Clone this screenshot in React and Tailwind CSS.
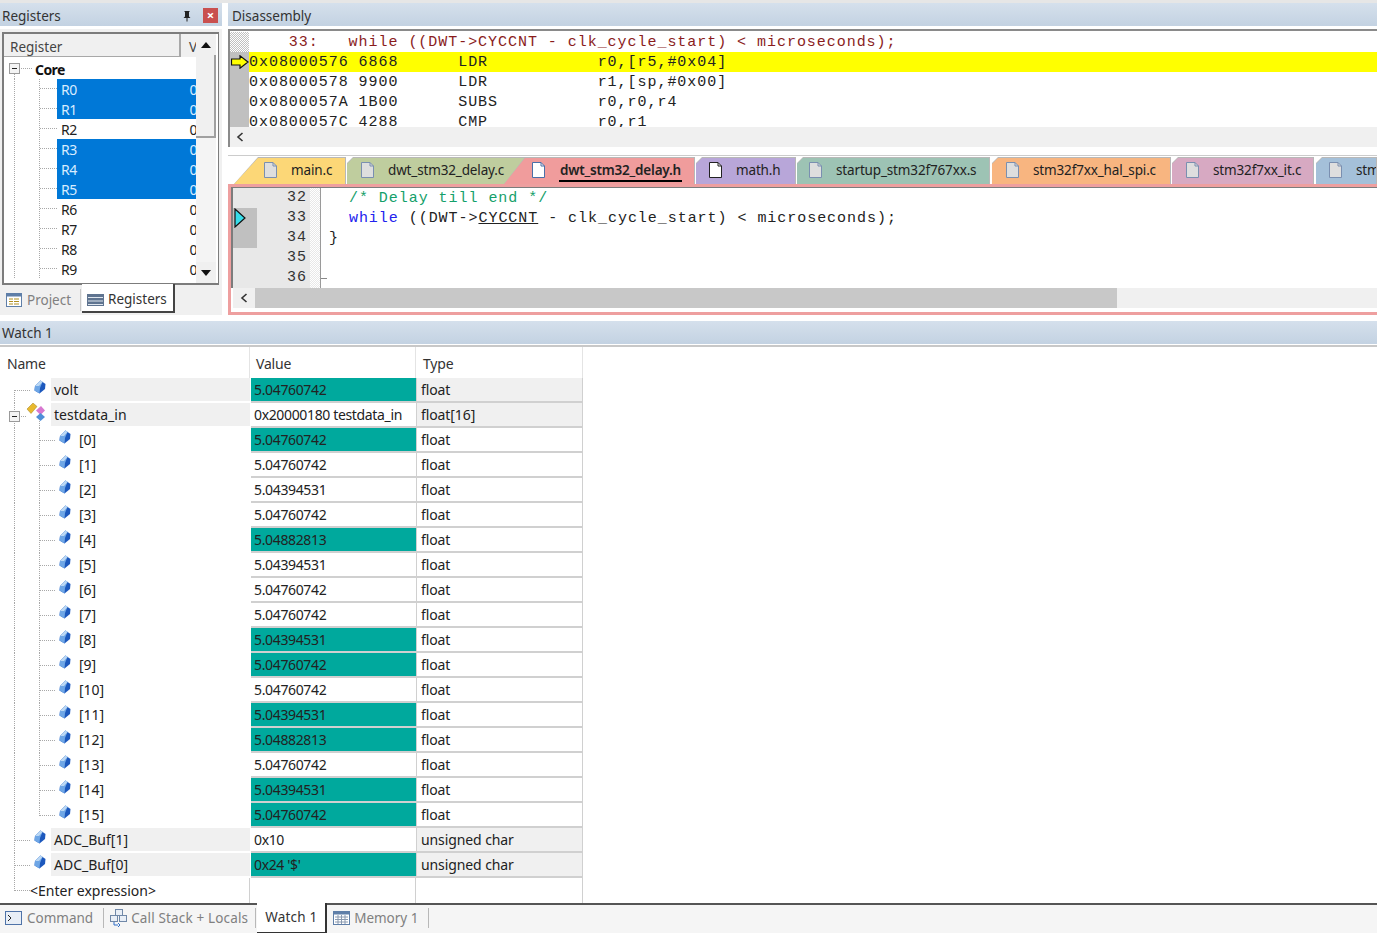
import React from 'react';

const UI = "[font-family:'Noto_Sans',sans-serif]";
const MONO = "[font-family:'Liberation_Mono',monospace] text-[15px] tracking-[0.96px]";

// tree icon used for every variable in the watch list
function Cube({ x, y }) {
    return (
        <g transform={`translate(${x} ${y})`}>
            <polygon points="0.5,-6.5 5.5,-3 5,2 -0.5,6.5 -5.5,3.5 -5,-1" fill="#1c58bd" />
            <polygon points="0.5,-6.5 2.5,-5 0,1 -0.5,6.5 -5.5,3.5 -5,-1" fill="#6ea6e6" />
            <polygon points="0.5,-6.5 2.5,-5 -1,-1 -5,-1" fill="#bcd8f4" />
        </g>
    );
}

function MinusBox({ x, y }) {
    return (
        <g>
            <rect x={x + 0.5} y={y + 0.5} width="10" height="10" fill="#f4f4f4" stroke="#9a9a9a" />
            <line x1={x + 3} x2={x + 8} y1={y + 5.5} y2={y + 5.5} stroke="#222" />
        </g>
    );
}

function Dots({ x1, y1, x2, y2 }) {
    return <line x1={x1} y1={y1} x2={x2} y2={y2} stroke="#a8a8a8" strokeDasharray="1 1" />;
}

function WatchTree({ kind, last }) {
    if (kind === 'child') {
        return (
            <svg width="76" height="25" className="shrink-0">
                <Dots x1={14.5} y1={0} x2={14.5} y2={25} />
                <Dots x1={39.5} y1={0} x2={39.5} y2={last ? 13 : 25} />
                <Dots x1={40} y1={12.5} x2={55} y2={12.5} />
                <Cube x={65} y={9} />
            </svg>
        );
    }
    if (kind === 'array') {
        return (
            <svg width="51" height="25" className="shrink-0">
                <Dots x1={14.5} y1={0} x2={14.5} y2={25} />
                <Dots x1={39.5} y1={18} x2={39.5} y2={25} />
                <Dots x1={19} y1={13.5} x2={27} y2={13.5} />
                <MinusBox x={9} y={8} />
                <polygon points="27,6 33,0 37,3.5 31,10.5" fill="#e8b92e" stroke="#a08020" strokeWidth="0.5" />
                <polygon points="36,7.5 41,3 45,7.5 40.5,12" fill="#d878d0" />
                <polygon points="36,14 40.5,10 45,14 40.5,18" fill="#4f8fd8" />
            </svg>
        );
    }
    if (kind === 'enter') {
        return (
            <svg width="30" height="25" className="shrink-0">
                <Dots x1={14.5} y1={0} x2={14.5} y2={13} />
                <Dots x1={15} y1={12.5} x2={30} y2={12.5} />
            </svg>
        );
    }
    return (
        <svg width="51" height="25" className="shrink-0">
            <Dots x1={14.5} y1={kind === 'first' ? 12 : 0} x2={14.5} y2={25} />
            <Dots x1={15} y1={12.5} x2={31} y2={12.5} />
            <Cube x={40} y={9} />
        </svg>
    );
}

function RegTree({ core }) {
    if (core) {
        return (
            <svg width="31" height="20" className="shrink-0">
                <Dots x1={10.5} y1={15} x2={10.5} y2={20} />
                <Dots x1={15} y1={9.5} x2={28} y2={9.5} />
                <MinusBox x={5} y={4} />
            </svg>
        );
    }
    return (
        <svg width="53" height="20" className="shrink-0">
            <Dots x1={10.5} y1={0} x2={10.5} y2={20} />
            <Dots x1={35.5} y1={0} x2={35.5} y2={20} />
            <Dots x1={36} y1={9.5} x2={53} y2={9.5} />
        </svg>
    );
}

function TitleBar({ children, right, text = 'pt-[4px] pl-[2px]' }) {
    return (
        <div className="h-[23px] shrink-0 flex items-center justify-between bg-gradient-to-b from-[#d5e0ec] to-[#c3d2e2] text-[13.5px] text-[#333]">
            <span className={text}>{children}</span>
            {right}
        </div>
    );
}

function DocIcon({ variant }) {
    const stroke = variant === 'black' ? '#222' : variant === 'blue' ? '#4a6fa8' : '#7a8fb0';
    const fill = variant === 'black' ? '#fff' : variant === 'blue' ? '#fff' : '#dedede';
    return (
        <svg width="15" height="18" viewBox="0 0 15 18" className="shrink-0">
            <path d="M1.5 1.5H10L13.5 5V16.5H1.5Z" fill={fill} stroke={stroke} />
            <path d="M10 1.5V5H13.5" fill="none" stroke={stroke} />
        </svg>
    );
}

const tabs = [
    { label: 'main.c', box: 'w-[112px] ml-[6px] z-[1] [clip-path:polygon(24px_0,100%_0,100%_100%,0_100%)]', inner: 'bg-[#fcd777] pl-[29px] [clip-path:polygon(24px_0,100%_0,100%_100%,0_100%)]' },
    { label: 'dwt_stm32_delay.c', box: 'w-[178px] ml-[1px] [clip-path:polygon(6px_0,100%_0,100%_100%,0_100%,0_6px)]', inner: 'bg-[#bfcd9e] pl-[13px] [clip-path:polygon(6px_0,100%_0,100%_100%,0_100%,0_6px)]' },
    { label: 'dwt_stm32_delay.h', box: 'w-[191px] -ml-[21px] z-[2] [clip-path:polygon(21px_0,100%_0,100%_100%,0_100%)]', inner: 'bg-[#f09c9c] pl-[27px] [clip-path:polygon(21px_0,100%_0,100%_100%,0_100%)]', active: true },
    { label: 'math.h', box: 'w-[100px] ml-[1px] [clip-path:polygon(6px_0,100%_0,100%_100%,0_100%,0_6px)]', inner: 'bg-[#b8a6d9] pl-[12px] [clip-path:polygon(6px_0,100%_0,100%_100%,0_100%,0_6px)]', doc: 'black' },
    { label: 'startup_stm32f767xx.s', box: 'w-[193px] ml-[1px] [clip-path:polygon(6px_0,100%_0,100%_100%,0_100%,0_6px)]', inner: 'bg-[#9dc3b4] pl-[11px] [clip-path:polygon(6px_0,100%_0,100%_100%,0_100%,0_6px)]' },
    { label: 'stm32f7xx_hal_spi.c', box: 'w-[179px] ml-[2px] [clip-path:polygon(6px_0,100%_0,100%_100%,0_100%,0_6px)]', inner: 'bg-[#f8b580] pl-[13px] [clip-path:polygon(6px_0,100%_0,100%_100%,0_100%,0_6px)]' },
    { label: 'stm32f7xx_it.c', box: 'w-[142px] ml-[1px] [clip-path:polygon(6px_0,100%_0,100%_100%,0_100%,0_6px)]', inner: 'bg-[#d7a9c2] pl-[13px] [clip-path:polygon(6px_0,100%_0,100%_100%,0_100%,0_6px)]' },
    { label: 'stm', box: 'w-[61px] ml-[2px] [clip-path:polygon(6px_0,100%_0,100%_100%,0_100%,0_6px)]', inner: 'bg-[#a4c0d9] pl-[12px] [clip-path:polygon(6px_0,100%_0,100%_100%,0_100%,0_6px)]' },
];

function EditorTab({ tab }) {
    return (
        <div className={`relative shrink-0 h-[27px] bg-[#b8b8b8] pt-[1px] pr-[1px] ${tab.box}`}>
            <div className={`h-full pb-[2px] flex items-center gap-[13px] text-[13.5px] tracking-[-0.15px] text-[#222] ${tab.inner}`}>
                <DocIcon variant={tab.doc || (tab.active ? 'blue' : 'gray')} />
                <span className={tab.active ? 'font-semibold border-b-2 border-black leading-[19px] px-[1px] -mb-[3px] tracking-[-0.2px]' : ''}>{tab.label}</span>
            </div>
        </div>
    );
}

const regs = [
    { n: 'R0', sel: true }, { n: 'R1', sel: true }, { n: 'R2' }, { n: 'R3', sel: true }, { n: 'R4', sel: true },
    { n: 'R5', sel: true }, { n: 'R6' }, { n: 'R7' }, { n: 'R8' }, { n: 'R9' },
];

function ArrowBtn({ up }) {
    return (
        <div className="h-[21px] shrink-0 bg-[#f0f0f0] flex items-center justify-center">
            <svg width="10" height="6">
                <polygon points={up ? '5,0 10,6 0,6' : '0,0 10,0 5,6'} fill="#111" />
            </svg>
        </div>
    );
}

function RegistersPanel() {
    return (
        <div className="w-[222px] shrink-0 flex flex-col h-[312px]">
            <TitleBar
                right={
                    <div className="flex items-center gap-[11px] pr-[4px] pt-[2px]">
                        <svg width="10" height="12" viewBox="0 0 10 12">
                            <path d="M2.5 1H7.5V2H7V6.5L8.5 8H5.5V11.5H4.5V8H1.5L3 6.5V2H2.5Z" fill="#222" />
                        </svg>
                        <div className="w-[15px] h-[15px] bg-[#c9504f] flex items-center justify-center text-white text-[13px] font-bold leading-none">×</div>
                    </div>
                }
            >
                Registers
            </TitleBar>
            <div className="mt-[3px] h-[256px] shrink-0 bg-[#f0f0f0] pl-[2px] pr-[3px] pt-[3px]">
                <div className="h-full border-t-2 border-l-2 border-r border-b-2 border-[#7c7c7c] flex bg-white overflow-hidden">
                    <div className="w-[192px] shrink-0 flex flex-col overflow-hidden">
                        <div className="h-[23px] shrink-0 flex bg-[#f0f0f0] text-[13.5px] text-[#444]">
                            <div className="w-[177px] shrink-0 pl-[6px] pt-[4px] flex items-center border-r-2 border-b border-[#a8a8a8]">Register</div>
                            <div className="flex-1 pl-[8px] pt-[4px] flex items-center overflow-hidden">V</div>
                        </div>
                        <div className="h-[20px] mt-[2px] shrink-0 flex items-center font-bold text-[14px] tracking-[-0.6px] text-[#111]">
                            <RegTree core />
                            Core
                        </div>
                        {regs.map((r) => (
                            <div key={r.n} className="h-[20px] shrink-0 flex text-[14px] tracking-[-0.4px]">
                                <RegTree />
                                <div className={`flex-1 flex items-center justify-between pl-[4px] -mr-[1px] ${r.sel ? 'bg-[#0078d7] text-[#d8ecff]' : 'text-[#222]'}`}>
                                    <span>{r.n}</span>
                                    <span>0</span>
                                </div>
                            </div>
                        ))}
                    </div>
                    <div className="w-[20px] shrink-0 flex flex-col bg-[#f4f4f4]">
                        <ArrowBtn up />
                        <div className="h-[83px] shrink-0 bg-[#f0f0f0] border-b-2 border-r-2 border-[#a0a0a0]" />
                        <div className="flex-1" />
                        <ArrowBtn />
                    </div>
                </div>
            </div>
            <div className="flex-1 flex bg-[#f0f0f0] text-[13.5px]">
                <div className="w-[81px] shrink-0 flex items-center pl-[6px] gap-[5px] text-[#808080] border-r border-[#c8c8c8] my-[4px]">
                    <svg width="16" height="14">
                        <rect x="0.5" y="0.5" width="15" height="13" fill="#fff" stroke="#5f7fa8" />
                        <rect x="0.5" y="0.5" width="15" height="3" fill="#5f7fa8" />
                        <path d="M3 6h4M3 8.5h4M3 11h4M8 6h5M8 8.5h5M8 11h5" stroke="#b09020" />
                    </svg>
                    Project
                </div>
                <div className="w-[93px] shrink-0 ml-[1px] -mt-[1px] h-[29px] pt-[4px] flex items-center pl-[5px] gap-[4px] bg-white border-r-2 border-b-2 border-[#444] text-[#333]">
                    <svg width="17" height="12">
                        <rect x="0" y="0" width="17" height="12" fill="#5f7490" />
                        <path d="M1 3.5H16M1 7H16M1 10.5H16" stroke="#dfe6ee" />
                    </svg>
                    Registers
                </div>
            </div>
        </div>
    );
}

const disasm = [
    { t: '    33:   while ((DWT->CYCCNT - clk_cycle_start) < microseconds);', c: 'text-[#8a1c1c]' },
    { t: '0x08000576 6868      LDR           r0,[r5,#0x04]', c: 'bg-[#ffff00] text-[#222]' },
    { t: '0x08000578 9900      LDR           r1,[sp,#0x00]', c: 'text-[#222]' },
    { t: '0x0800057A 1B00      SUBS          r0,r0,r4', c: 'text-[#222]' },
    { t: '0x0800057C 4288      CMP           r0,r1', c: 'text-[#222]' },
];

function DisassemblyPanel() {
    return (
        <div className="mt-[3px] h-[118px] shrink-0 border-t-2 border-l-2 border-[#8a8a8a] pt-[1px] flex flex-col overflow-hidden">
            <div className="h-[95px] shrink-0 flex overflow-hidden">
                <div className="w-[19px] shrink-0 flex flex-col bg-[#c0c0c0]">
                    <div className="h-[20px] shrink-0 bg-[repeating-conic-gradient(#c0c0c0_0_25%,#fff_0_50%)] bg-[length:2px_2px]" />
                    <div className="h-[20px] shrink-0 flex items-center pl-[1px]">
                        <svg width="18" height="14">
                            <polygon points="0.5,4 9,4 9,0.8 17,7 9,13.2 9,10 0.5,10" fill="#ffff00" stroke="#111" strokeWidth="1.2" />
                        </svg>
                    </div>
                </div>
                <div className={`flex-1 ${MONO}`}>
                    {disasm.map((l, i) => (
                        <div key={i} className={`h-[20px] leading-[21px] whitespace-pre ${l.c}`}>{l.t}</div>
                    ))}
                </div>
            </div>
            <div className="h-[20px] shrink-0 bg-[#f0f0f0] flex items-center pl-[6px]">
                <svg width="9" height="10">
                    <path d="M6.5 1L2 5L6.5 9" fill="none" stroke="#333" strokeWidth="1.6" />
                </svg>
            </div>
        </div>
    );
}

const lineNums = ['32', '33', '34', '35', '36'];

function Editor() {
    return (
        <div className="h-[131px] shrink-0 border-[3px] border-r-0 border-[#ee9f9f] bg-white flex flex-col overflow-hidden">
            <div className="h-[101px] shrink-0 flex border-t border-l-2 border-[#7c7c7c]">
                <div className={`w-[77px] shrink-0 bg-[#e8e8e8] ${MONO} text-[#333] flex flex-col`}>
                    {lineNums.map((n, i) => (
                        <div key={n} className="h-[20px] leading-[20px] flex justify-between">
                            <div className={`w-[24px] flex items-start ${i === 1 || i === 2 ? 'bg-[#c0c0c0]' : ''}`}>
                                {i === 1 && (
                                    <svg width="13" height="20" className="ml-[1px]">
                                        <polygon points="1,1 11,10 1,19" fill="#38dce8" stroke="#111" strokeWidth="1.2" />
                                    </svg>
                                )}
                            </div>
                            <span className="pr-[3px]">{n}</span>
                        </div>
                    ))}
                </div>
                <div className="w-[11px] shrink-0 bg-[repeating-conic-gradient(#e8e8e8_0_25%,#fff_0_50%)] bg-[length:2px_2px] border-r border-[#9a9a9a]" />
                <div className={`flex-1 ${MONO} text-[#222]`}>
                    <div className="h-[20px] pl-[8px] leading-[22px] whitespace-pre text-[#14a06a]">{'  /* Delay till end */'}</div>
                    <div className="h-[20px] pl-[8px] leading-[22px] whitespace-pre">
                        {'  '}<span className="text-[#2222ee]">while</span>{' ((DWT->'}<span className="underline">CYCCNT</span>{' - clk_cycle_start) < microseconds);'}
                    </div>
                    <div className="h-[20px] pl-[8px] leading-[22px]">{'}'}</div>
                    <div className="h-[20px]" />
                    <div className="h-[20px] flex items-center">
                        <div className="w-[6px] h-px bg-[#888]" />
                    </div>
                </div>
            </div>
            <div className="h-[20px] shrink-0 ml-[2px] bg-[#f0f0f0] flex">
                <div className="w-[22px] shrink-0 flex items-center justify-center">
                    <svg width="9" height="10">
                        <path d="M6.5 1L2 5L6.5 9" fill="none" stroke="#333" strokeWidth="1.6" />
                    </svg>
                </div>
                <div className="w-[862px] shrink-0 bg-[#c8c8c8]" />
            </div>
        </div>
    );
}

const F = 'float';
const rows = [
    { name: 'volt', kind: 'first', value: '5.04760742', hl: true, type: F },
    { name: 'testdata_in', kind: 'array', value: '0x20000180 testdata_in', type: 'float[16]' },
    { name: '[0]', kind: 'child', value: '5.04760742', hl: true, type: F },
    { name: '[1]', kind: 'child', value: '5.04760742', type: F },
    { name: '[2]', kind: 'child', value: '5.04394531', type: F },
    { name: '[3]', kind: 'child', value: '5.04760742', type: F },
    { name: '[4]', kind: 'child', value: '5.04882813', hl: true, type: F },
    { name: '[5]', kind: 'child', value: '5.04394531', type: F },
    { name: '[6]', kind: 'child', value: '5.04760742', type: F },
    { name: '[7]', kind: 'child', value: '5.04760742', type: F },
    { name: '[8]', kind: 'child', value: '5.04394531', hl: true, type: F },
    { name: '[9]', kind: 'child', value: '5.04760742', hl: true, type: F },
    { name: '[10]', kind: 'child', value: '5.04760742', type: F },
    { name: '[11]', kind: 'child', value: '5.04394531', hl: true, type: F },
    { name: '[12]', kind: 'child', value: '5.04882813', hl: true, type: F },
    { name: '[13]', kind: 'child', value: '5.04760742', type: F },
    { name: '[14]', kind: 'child', value: '5.04394531', hl: true, type: F },
    { name: '[15]', kind: 'child', value: '5.04760742', hl: true, type: F, last: true },
    { name: 'ADC_Buf[1]', kind: 'top', value: '0x10', type: 'unsigned char' },
    { name: 'ADC_Buf[0]', kind: 'top', value: "0x24 '$'", hl: true, type: 'unsigned char' },
];

function WatchRow({ row }) {
    const child = row.kind === 'child';
    return (
        <div className="h-[25px] flex text-[14px] text-[#222]">
            <div className="w-[250px] shrink-0 flex">
                <WatchTree kind={row.kind} last={row.last} />
                <div className={`flex-1 mb-[2px] pl-[3px] flex items-center ${child ? '' : 'bg-[#f0f0f0]'}`}>{row.name}</div>
            </div>
            <div className={`w-[165px] shrink-0 ml-[1px] pl-[3px] flex items-center tracking-[-0.35px] border-b-2 border-[#d0d0d0] ${row.hl ? 'bg-[#00a99d]' : ''}`}>{row.value}</div>
            <div className={`w-[167px] shrink-0 pl-[4px] flex items-center tracking-[-0.1px] border-l border-r border-b-2 border-[#d0d0d0] ${child ? '' : 'bg-[#f0f0f0]'}`}>{row.type}</div>
        </div>
    );
}

function BottomTab({ children, icon, gap = 'gap-[4px]' }) {
    return (
        <div className={`flex items-center ${gap} text-[#808080] shrink-0`}>
            {icon}
            {children}
        </div>
    );
}

function WatchPanel() {
    return (
        <>
            <div className="mt-[3px]">
                <TitleBar text="pt-[2px] pl-[2px]">Watch 1</TitleBar>
            </div>
            <div className="h-[2px] mt-[1px] shrink-0 bg-[#c8c8c8]" />
            <div className="h-[556px] shrink-0 overflow-hidden">
                <div className="h-[31px] flex text-[14px] tracking-[-0.2px] text-[#333]">
                    <div className="w-[250px] shrink-0 pl-[7px] flex items-center pt-[1px] border-r border-[#e4e4e4]">Name</div>
                    <div className="w-[166px] shrink-0 pl-[6px] flex items-center pt-[1px] border-r border-[#e4e4e4]">Value</div>
                    <div className="w-[167px] shrink-0 pl-[7px] flex items-center pt-[1px] border-r border-[#e4e4e4]">Type</div>
                </div>
                {rows.map((r) => (
                    <WatchRow key={r.name} row={r} />
                ))}
                <div className="h-[25px] flex text-[14px] text-[#222]">
                    <div className="w-[250px] shrink-0 flex items-center border-r border-[#d0d0d0]">
                        <WatchTree kind="enter" />
                        {'<Enter expression>'}
                    </div>
                    <div className="w-[166px] shrink-0 border-r border-[#d0d0d0]" />
                    <div className="w-[167px] shrink-0 border-r border-[#d0d0d0]" />
                </div>
            </div>
            <div className="flex-1 flex items-stretch bg-[#f5f5f5] border-t-2 border-[#555] text-[13.5px]">
                <div className="flex items-center pl-[5px] h-[24px] my-[1px]">
                    <BottomTab
                        gap="gap-[5px]"
                        icon={
                            <svg width="17" height="14">
                                <rect x="0.5" y="0.5" width="16" height="13" fill="#e8eef6" stroke="#4f73a8" />
                                <path d="M3 4L6 7L3 10" fill="none" stroke="#222" />
                            </svg>
                        }
                    >
                        Command
                    </BottomTab>
                    <div className="w-px h-[20px] bg-[#b8b8b8] ml-[10px] mr-[5px]" />
                    <BottomTab
                        gap="gap-[3px] tracking-[0.15px]"
                        icon={
                            <svg width="19" height="18">
                                <rect x="6.5" y="0.5" width="7" height="6" fill="#e8eef6" stroke="#7088a8" />
                                <rect x="1.5" y="6.5" width="7" height="6" fill="#e8eef6" stroke="#7088a8" />
                                <rect x="10.5" y="6.5" width="7" height="6" fill="#e8eef6" stroke="#7088a8" />
                                <path d="M5 13V16H9M9 14L11 16L9 18" fill="none" stroke="#2f6fc9" />
                            </svg>
                        }
                    >
                        Call Stack + Locals
                    </BottomTab>
                    <div className="w-px h-[20px] bg-[#b8b8b8] ml-[7px]" />
                </div>
                <div className="w-[70px] shrink-0 ml-[1px] -mt-[2px] h-[31px] flex items-center pl-[8px] tracking-[0.2px] bg-white border-r-2 border-b-2 border-[#333] text-[#333]">
                    Watch 1
                </div>
                <div className="flex items-center h-[24px] my-[1px] pl-[6px]">
                    <BottomTab
                        icon={
                            <svg width="17" height="14">
                                <rect x="0.5" y="0.5" width="16" height="13" fill="#fff" stroke="#5f7fa8" />
                                <rect x="0.5" y="0.5" width="16" height="3" fill="#5f7fa8" />
                                <path d="M2 6H15M2 8.5H15M2 11H15M5 4V13M8.5 4V13M12 4V13" stroke="#8a9ab0" />
                            </svg>
                        }
                    >
                        Memory 1
                    </BottomTab>
                    <div className="w-px h-[20px] bg-[#b8b8b8] ml-[10px]" />
                </div>
            </div>
        </>
    );
}

export default function App() {
    return (
        <div className={`w-[1377px] h-[933px] overflow-hidden bg-white flex flex-col ${UI}`}>
            <div className="h-[3px] shrink-0 bg-[#e6e6e6]" />
            <div className="h-[315px] shrink-0 flex">
                <RegistersPanel />
                <div className="flex-1 min-w-0 ml-[6px] flex flex-col">
                    <TitleBar>
                        <span className="pl-[2px]">Disassembly</span>
                    </TitleBar>
                    <DisassemblyPanel />
                    <div className="mt-[8px] h-[29px] shrink-0 border-t border-[#cccccc] flex items-end overflow-hidden">
                        {tabs.map((t) => (
                            <EditorTab key={t.label} tab={t} />
                        ))}
                    </div>
                    <Editor />
                </div>
            </div>
            <WatchPanel />
        </div>
    );
}
